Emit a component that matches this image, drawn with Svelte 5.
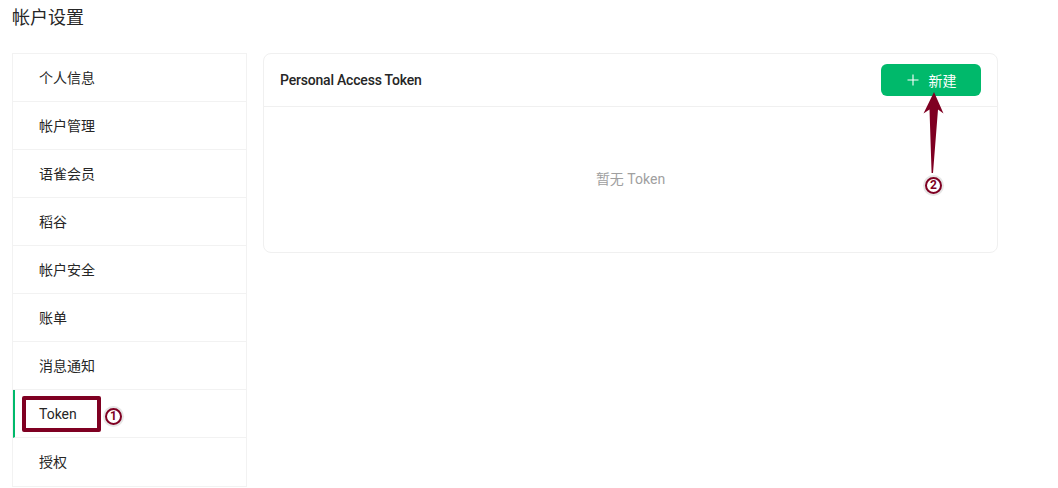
<script>
    const menu = ["个人信息", "帐户管理", "语雀会员", "稻谷", "帐户安全", "账单", "消息通知", "Token", "授权"];
    const active = "Token";
</script>

<div class="page">
    <h1 class="title">帐户设置</h1>
    <div class="content">
        <ul class="menu">
            {#each menu as item}
                <li class="menu-item" class:active={item === active}>{item}</li>
            {/each}
        </ul>
        <div class="card">
            <div class="card-head">
                <span class="card-title">Personal Access Token</span>
                <button class="new-btn">
                    <svg class="plus" viewBox="0 0 12 12" width="12" height="12">
                        <path d="M6 .5v11M.5 6h11" stroke="#fff" stroke-width="1.1" fill="none" />
                    </svg>
                    <span>新建</span>
                </button>
            </div>
            <div class="empty">暂无 Token</div>
        </div>
    </div>

    <div class="mark-box"></div>
    <span class="badge badge-one">1</span>
    <svg class="arrow" viewBox="0 0 22 84" width="22" height="84">
        <path d="M12 0L21.5 21.5L16 17.5L11 81H9.6L7.5 17.5L1.5 21.5Z" fill="#7f0022" />
    </svg>
    <span class="badge badge-two">2</span>
</div>

<style>
    :global(body) {
        margin: 0;
        background: #fff;
    }
    .page {
        position: relative;
        width: 1058px;
        height: 488px;
        overflow: hidden;
        box-sizing: border-box;
        padding: 5px 0 0 12px;
        font-family: Roboto, "Noto Sans CJK SC", sans-serif;
        color: #262626;
    }
    .title {
        margin: 0 0 23px;
        font-size: 18px;
        line-height: 25px;
        font-weight: 400;
    }
    .content {
        display: flex;
        gap: 16px;
        align-items: flex-start;
    }
    .menu {
        width: 235px;
        box-sizing: border-box;
        margin: 0;
        padding: 0;
        list-style: none;
        border: 1px solid #f2f2f2;
    }
    .menu-item {
        height: 48px;
        box-sizing: border-box;
        padding: 0 26px;
        font-size: 14px;
        line-height: 49px;
        border-bottom: 1px solid #f2f2f2;
    }
    .menu-item:last-child {
        border-bottom: none;
    }
    .menu-item.active {
        border-left: 2px solid #00b96b;
        padding-left: 24px;
    }
    .card {
        width: 735px;
        height: 200px;
        box-sizing: border-box;
        border: 1px solid #f0f0f0;
        border-radius: 8px;
    }
    .card-head {
        height: 53px;
        box-sizing: border-box;
        display: flex;
        align-items: center;
        justify-content: space-between;
        padding: 0 16px 1px;
        border-bottom: 1px solid #f0f0f0;
    }
    .card-title {
        font-size: 14px;
        font-weight: 500;
        letter-spacing: -0.2px;
    }
    .new-btn {
        width: 100px;
        height: 32px;
        display: flex;
        align-items: center;
        justify-content: center;
        gap: 10px;
        padding: 0 0 0 1px;
        border: none;
        border-radius: 6px;
        background: #00b96b;
        color: #fff;
        font-family: inherit;
        font-size: 14px;
    }
    .plus {
        display: block;
    }
    .empty {
        height: 141px;
        display: flex;
        align-items: center;
        justify-content: center;
        font-size: 14px;
        color: #a0a0a0;
    }
    .mark-box {
        position: absolute;
        left: 22px;
        top: 396px;
        width: 71px;
        height: 28px;
        border: 4px solid #7f0022;
        border-radius: 2px;
    }
    .badge {
        position: absolute;
        width: 17px;
        height: 17px;
        box-sizing: border-box;
        border: 2px solid #7f0022;
        border-radius: 50%;
        box-shadow: 0 0 0 2px #e6e6e6;
        background: #fff;
        color: #7f0022;
        font-size: 12px;
        font-weight: 700;
        line-height: 13px;
        text-align: center;
    }
    .badge-one {
        left: 105px;
        top: 408px;
    }
    .badge-two {
        left: 925px;
        top: 177px;
    }
    .arrow {
        position: absolute;
        left: 922px;
        top: 92px;
    }
</style>
